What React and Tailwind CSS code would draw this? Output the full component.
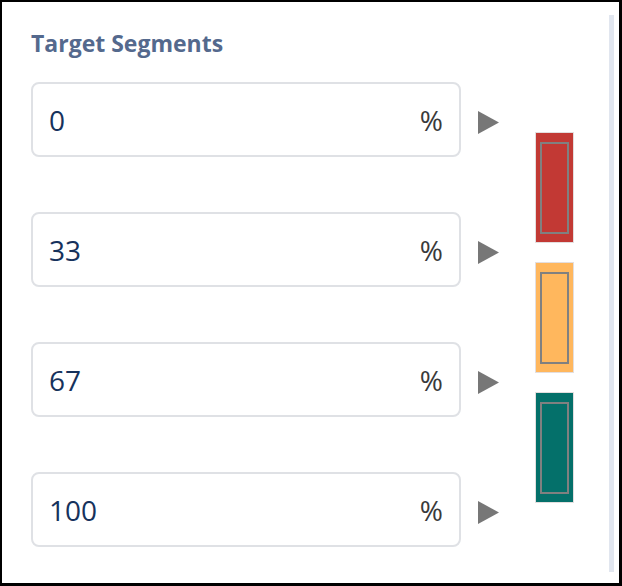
const rows = ["0", "33", "67", "100"];
const blocks = ["bg-[#c23934]", "bg-[#ffb75d]", "bg-[#04706a]"];

function Arrow() {
    return (
        <svg width="21" height="23" viewBox="0 0 21 23" className="mt-[6px] shrink-0">
            <polygon points="0,0 21,11.5 0,23" fill="#777777" />
        </svg>
    );
}

function SegmentRow({ value }) {
    return (
        <div className="flex items-center">
            <div className="flex h-[75px] w-[430px] items-center justify-between rounded-[8px] border-2 border-[#dfe1e5] bg-white pl-[16px] pr-[16px]">
                <span className="text-[28px] text-[#16325c]">{value}</span>
                <span className="text-[28px] text-[#3a3a3a]">%</span>
            </div>
            <div className="ml-[17px]">
                <Arrow />
            </div>
        </div>
    );
}

export default function App() {
    return (
        <div className="h-[586px] w-[622px] border-b-[3px] border-l-2 border-r-[3px] border-t-2 border-black bg-white pb-[11px] pr-[5px] pt-[13px]" style={{ fontFamily: '"Open Sans", "Liberation Sans", sans-serif' }}>
            <div className="h-full border-r-[5px] border-[#e1e6ef] pl-[29px] pt-[13px]">
                <div className="text-[23px] font-bold leading-[30px] text-[#54698d]">
                    Target Segments
                </div>

                <div className="mt-[24px] flex">
                    <div className="flex flex-col gap-[55px]">
                        {rows.map((v) => (
                            <SegmentRow key={v} value={v} />
                        ))}
                    </div>

                    <div className="ml-[36px] flex flex-col gap-[19px] pt-[50px]">
                        {blocks.map((c) => (
                            <div key={c} className={`h-[111px] w-[39px] border border-[#e3dede] px-[4px] pb-[8px] pt-[9px] ${c}`}>
                                <div className="h-full border-2 border-[#808080]" />
                            </div>
                        ))}
                    </div>
                </div>
            </div>
        </div>
    );
}
